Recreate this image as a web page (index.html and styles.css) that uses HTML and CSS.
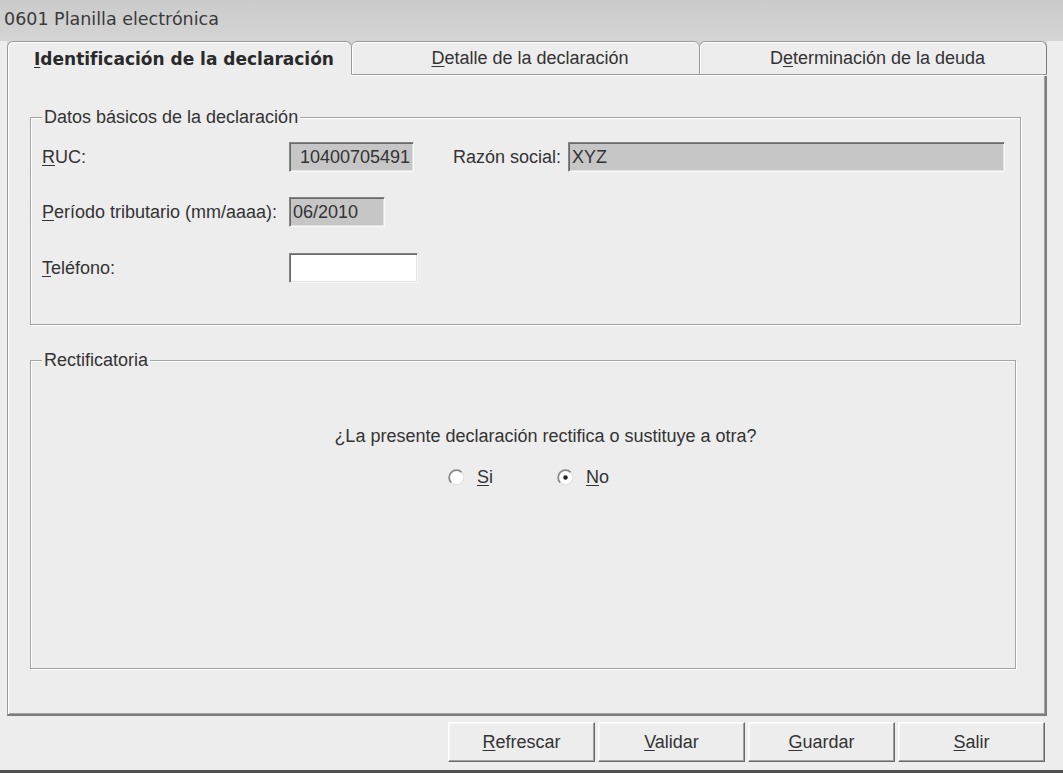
FILE: index.html
```html
<!DOCTYPE html>
<html lang="es">
<head>
<meta charset="utf-8">
<title>0601 Planilla electrónica</title>
<link rel="stylesheet" href="styles.css">
</head>
<body>
<div class="window">
  <div class="titlebar">0601 Planilla electrónica</div>
  <div class="tabctl">
    <div class="tabs">
      <div class="tab active"><u>I</u>dentificación de la declaración</div>
      <div class="tab t2"><u>D</u>etalle de la declaración</div>
      <div class="tab t3">D<u>e</u>terminación de la deuda</div>
    </div>
    <div class="panel">
      <fieldset class="group g1">
        <legend>Datos básicos de la declaración</legend>
        <div class="row">
          <span class="lbl"><u>R</u>UC:</span>
          <div class="field ro num w-ruc">10400705491</div>
          <span class="lbl2">Razón social:</span>
          <div class="field ro w-razon">XYZ</div>
        </div>
        <div class="row r2">
          <span class="lbl"><u>P</u>eríodo tributario (mm/aaaa):</span>
          <div class="field ro w-per">06/2010</div>
        </div>
        <div class="row r3">
          <span class="lbl"><u>T</u>eléfono:</span>
          <div class="field white w-tel"></div>
        </div>
      </fieldset>
      <fieldset class="group g2">
        <legend>Rectificatoria</legend>
        <p class="question">¿La presente declaración rectifica o sustituye a otra?</p>
        <div class="radios">
          <span class="radio r-si">
            <svg class="rb" width="17" height="17" viewBox="0 0 17 17"><circle cx="8.5" cy="8.5" r="7.3" fill="#fff"/><path d="M13.7 3.3 A7.3 7.3 0 0 0 3.3 13.7" fill="none" stroke="#8a8a8a" stroke-width="1.8"/><path d="M3.3 13.7 A7.3 7.3 0 0 0 13.7 3.3" fill="none" stroke="#e2e2e2" stroke-width="1.3"/></svg>
            <span><u>S</u>i</span>
          </span>
          <span class="radio">
            <svg class="rb" width="17" height="17" viewBox="0 0 17 17"><circle cx="8.5" cy="8.5" r="7.3" fill="#fff"/><path d="M13.7 3.3 A7.3 7.3 0 0 0 3.3 13.7" fill="none" stroke="#8a8a8a" stroke-width="1.8"/><path d="M3.3 13.7 A7.3 7.3 0 0 0 13.7 3.3" fill="none" stroke="#e2e2e2" stroke-width="1.3"/><circle cx="8.5" cy="8.5" r="2.2" fill="#222"/></svg>
            <span><u>N</u>o</span>
          </span>
        </div>
      </fieldset>
    </div>
  </div>
  <div class="buttons">
    <button class="btn"><u>R</u>efrescar</button>
    <button class="btn"><u>V</u>alidar</button>
    <button class="btn"><u>G</u>uardar</button>
    <button class="btn"><u>S</u>alir</button>
  </div>
</div>
</body>
</html>
```
FILE: styles.css
```css
html, body {
  margin: 0;
  padding: 0;
  background: #ededed;
}

.window {
  width: 1063px;
  height: 773px;
  box-sizing: border-box;
  border-bottom: 3px solid #505050;
  background: #ededed;
  font-family: "Liberation Sans", Arial, sans-serif;
  font-size: 18px;
  color: #333;
  overflow: hidden;
}

u {
  text-decoration: underline;
  text-decoration-thickness: 1px;
  text-underline-offset: 2px;
}

.titlebar {
  height: 41px;
  line-height: 38px;
  padding-left: 4px;
  font-family: "DejaVu Sans", sans-serif;
  font-size: 17.5px;
  color: #3a3a3a;
  background: linear-gradient(#cbcbcb, #d4d4d4);
  box-sizing: border-box;
}

.tabctl {
  margin-left: 7px;
  width: 1040px;
}

.tabs {
  display: flex;
  align-items: flex-start;
  height: 35px;
  background: #d6d6d6;
}

.tab {
  box-sizing: border-box;
  height: 34px;
  border: 1px solid #9b9b9b;
  border-radius: 6px 6px 0 0;
  background: #ededed;
  box-shadow: inset 1px 1px 0 #fff, 0 1px 0 #fff;
  text-align: center;
  padding-left: 9px;
  line-height: 33px;
  white-space: nowrap;
}

.tab.active {
  flex: 0 0 345px;
  height: 35px;
  border-bottom: none;
  box-shadow: inset 1px 1px 0 #fff;
  font-family: "DejaVu Sans", sans-serif;
  font-weight: bold;
  font-size: 17px;
  line-height: 34px;
  color: #2a2a2a;
}

.t2 {
  flex: 0 0 349px;
  margin-left: -1px;
}

.t3 {
  flex: 1 1 auto;
  margin-left: -1px;
  border-right-color: #7a7a7a;
}

.panel {
  box-sizing: border-box;
  height: 640px;
  border-left: 1px solid #9b9b9b;
  border-right: 2px solid #7c7c7c;
  border-bottom: 2px solid #7c7c7c;
  box-shadow: inset 1px 0 0 #fff, inset -1px -1px 0 #a3a3a3;
  padding: 31px 0 0 22px;
}

.group {
  box-sizing: border-box;
  margin: 0;
  min-width: 0;
  border: 1px solid #a4a4a4;
  box-shadow: 1px 1px 0 #fff, inset 1px 1px 0 #fff;
}

.group legend {
  padding: 0 2px;
  margin: 0;
  line-height: 20px;
  background: #ededed;
  color: #333;
}

.g1 {
  width: 991px;
  padding: 15px 0 41px 11px;
}

.g2 {
  width: 986px;
  margin-top: 25px;
  padding: 55px 0 180px 11px;
}

.row {
  display: flex;
  align-items: center;
  height: 30px;
}

.r2 {
  margin-top: 25px;
}

.r3 {
  margin-top: 26px;
}

.lbl {
  flex: 0 0 247px;
  white-space: nowrap;
}

.lbl2 {
  flex: 0 0 115px;
  margin-left: 39px;
  white-space: nowrap;
}

.field {
  box-sizing: border-box;
  height: 30px;
  border: 1px solid;
  border-color: #858585 #f8f8f8 #f8f8f8 #858585;
  box-shadow: inset 1px 1px 0 #6a6a6a, inset -1px -1px 0 #e2e2e2;
  line-height: 28px;
  padding: 0 3px;
  color: #333;
  white-space: nowrap;
}

.ro {
  background: #c6c6c6;
}

.white {
  background: #fff;
}

.num {
  text-align: right;
}

.w-ruc { width: 125px; }
.w-razon { width: 437px; }
.w-per { width: 96px; }
.w-tel { width: 129px; }

.question {
  margin: 0;
  line-height: 22px;
  text-align: center;
  padding-left: 34px;
  color: #333;
}

.radios {
  display: flex;
  align-items: center;
  margin-top: 19px;
  margin-left: 406px;
  height: 22px;
}

.radio {
  display: flex;
  align-items: center;
  gap: 12px;
}

.r-si {
  margin-right: 64px;
}

.rb {
  display: block;
}

.buttons {
  display: flex;
  justify-content: flex-end;
  gap: 3px;
  padding-right: 18px;
  margin-top: 6px;
}

.btn {
  width: 147px;
  height: 40px;
  box-sizing: border-box;
  margin: 0;
  padding: 0;
  background: #ededed;
  border: 1px solid;
  border-color: #fff #6a6a6a #6a6a6a #fff;
  box-shadow: inset -1px -1px 0 #a0a0a0, inset 1px 1px 0 #f7f7f7;
  font-family: "Liberation Sans", Arial, sans-serif;
  font-size: 18px;
  color: #333;
}
```
